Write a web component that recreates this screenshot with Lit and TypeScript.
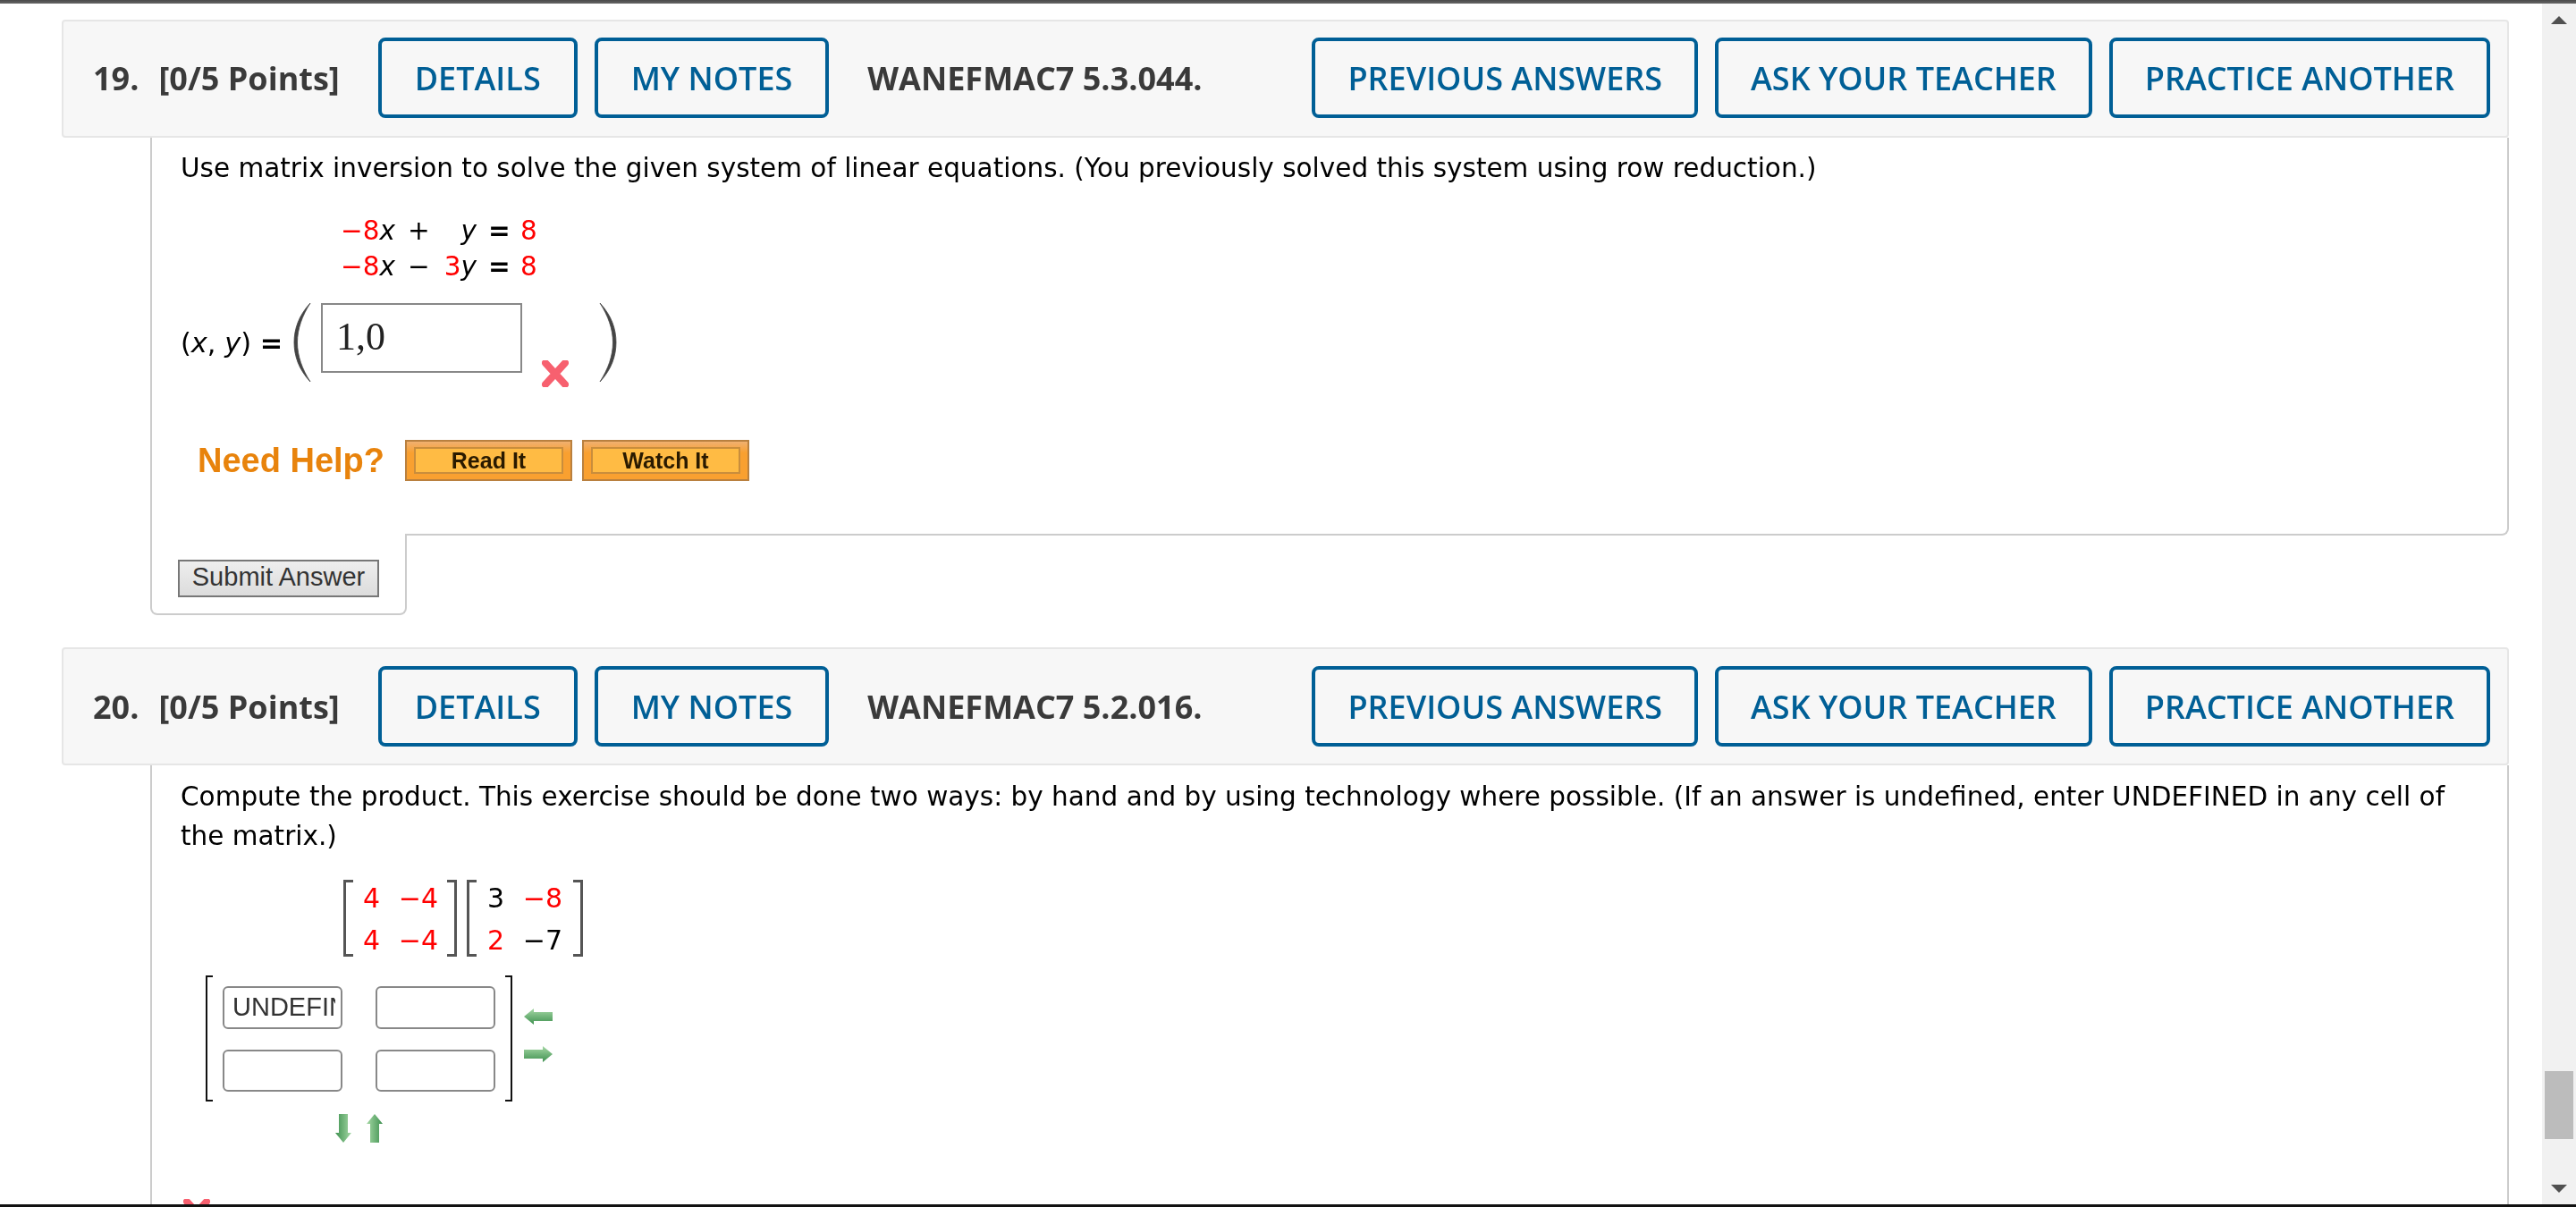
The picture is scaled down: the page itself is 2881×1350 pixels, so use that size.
import { LitElement, html, css, svg } from "lit";
import { customElement } from "lit/decorators.js";

const crossMark = html`<svg class="cross" viewBox="0 0 30 30" width="30" height="30"><path d="M4 3 L26 27 M26 3 L4 27" stroke="#f7606f" stroke-width="8" stroke-linecap="round" fill="none"/></svg>`;

const arrowDefs = svg`<defs><linearGradient id="ag" x1="0" y1="0" x2="0" y2="1"><stop offset="0" stop-color="#a5d8a5"/><stop offset="1" stop-color="#3f9150"/></linearGradient></defs>`;
const arrow = (cls: string) => html`<svg class="arrow ${cls}" viewBox="0 0 32 18" width="32" height="18">${arrowDefs}<path d="M0 4 H21 V0 L32 9 L21 18 V14 H0 Z" fill="url(#ag)"/></svg>`;

const paren = (flip: boolean) => html`<svg class="paren ${flip ? "flip" : ""}" viewBox="0 0 20 90" width="20" height="90"><path d="M19 1 C6 15 1 30 1 45 C1 60 6 75 19 89 C10 75 4.5 60 4.5 45 C4.5 30 10 15 19 1 Z" fill="#444" stroke="#444" stroke-width="0.8"/></svg>`;

const header = (num: string, code: string) => html`
  <div class="qhead">
    <span class="num">${num}</span>
    <span class="pts">[0/5 Points]</span>
    <a class="btn first">DETAILS</a>
    <a class="btn wide">MY NOTES</a>
    <span class="code">${code}</span>
    <a class="btn push">PREVIOUS ANSWERS</a>
    <a class="btn">ASK YOUR TEACHER</a>
    <a class="btn">PRACTICE ANOTHER</a>
  </div>`;

@customElement("app-root")
export class AppRoot extends LitElement {
  static styles = css`
    :host { display: block; width: 2881px; height: 1350px; overflow: hidden; background: #fff; font-family: "DejaVu Sans", sans-serif; color: #000; }
    .frame { width: 2881px; height: 1350px; display: flex; flex-direction: column; filter: blur(0.5px); }
    .topbar { height: 4px; flex: none; background: linear-gradient(#4a4a4a, #666); }
    .bottombar { height: 3px; flex: none; background: #111; }
    .main { flex: 1; min-height: 0; display: flex; }
    .content { flex: 1; min-width: 0; overflow: hidden; padding: 18px 37px 0 69px; }
    .scrollbar { width: 38px; flex: none; background: #f1f1f1; display: flex; flex-direction: column; align-items: center; padding: 14px 0 13px; box-sizing: border-box; }
    .up { width: 0; height: 0; border-left: 9px solid transparent; border-right: 9px solid transparent; border-bottom: 9px solid #505050; }
    .down { width: 0; height: 0; border-left: 9px solid transparent; border-right: 9px solid transparent; border-top: 9px solid #505050; }
    .thumb { width: 32px; height: 76px; background: #bcbcbc; margin-top: auto; margin-bottom: 51px; }

    .qhead { height: 132px; box-sizing: border-box; background: #f7f7f7; border: 2px solid #e6e6e6; border-radius: 4px; display: flex; align-items: center; padding: 0 19px 2px 33px; font-family: "Open Sans", sans-serif; white-space: nowrap; }
    .second .qhead { padding-bottom: 0; }
    .num, .pts, .code { font-weight: 700; font-size: 36px; color: #3a3a3a; }
    .pts { margin-left: 22px; }
    .btn { box-sizing: border-box; height: 90px; display: flex; align-items: center; padding: 0 36px; border: 4.5px solid #005f96; border-radius: 8px; color: #005f96; font-size: 36px; font-weight: 600; margin-left: 19px; }
    .btn.first { margin-left: 43px; padding: 0 37px; }
    .btn.wide { padding: 0 37px; }
    .code { margin-left: 43px; }
    .btn.push { margin-left: auto; }

    .qbody { margin-left: 99px; box-sizing: border-box; border: 2px solid #ccc; border-top: none; padding: 12px 0 0 32px; font-size: 29.5px; line-height: 44px; }
    .qbody.one { height: 445px; border-bottom-right-radius: 8px; }
    .qbody.two { border-bottom: none; height: 700px; padding-top: 13px; padding-right: 60px; }
    .tab { margin-left: 99px; margin-top: -2px; width: 287px; height: 91px; box-sizing: border-box; position: relative; background: #fff; border: 2px solid #ccc; border-top: none; border-radius: 0 0 8px 8px; padding: 29px 0 0 29px; }
    .submit { display: block; box-sizing: border-box; width: 225px; height: 42px; padding: 0 0 4px; border: 2px solid #777; background: linear-gradient(#eee, #dcdcdc); color: #333; font: 29px "Liberation Sans", sans-serif; line-height: 34px; text-align: center; }
    .second { margin-top: 36px; }

    .eq { margin: 28px 0 0 179px; display: grid; grid-template-columns: 75px 37px 53px 36px 30px; line-height: 40px; font-size: 29.5px; }
    .eq span { white-space: pre; }
    .r { color: #f00; }
    i { font-style: italic; }
    .cy { text-align: right; padding-right: 13px; }
    .eqop { font-weight: 700; }

    .answer { display: flex; align-items: flex-start; margin-top: 20px; height: 96px; }
    .lhs { font-size: 30.4px; line-height: 44px; margin-top: 24px; width: 126px; white-space: nowrap; }
    .paren { flex: none; display: block; }
    .paren.flip { transform: scaleX(-1); margin-left: 34px; }
    .bigin { width: 225px; height: 78px; margin: 1px 0 0 11px; box-sizing: border-box; border: 2px solid #888; background: #fff; font: 44px "Liberation Serif", serif; padding: 0 0 3px 15px; color: #222; outline: none; }
    .answer .cross { margin: 65px 0 0 22px; }

    .help { display: flex; align-items: center; margin: 58px 0 0 19px; height: 46px; }
    .needhelp { font: 700 38px "Liberation Sans", sans-serif; color: #e8830c; width: 232px; white-space: nowrap; }
    .orange { box-sizing: border-box; width: 187px; height: 46px; margin-right: 11px; border: 2px solid #b9803f; background: linear-gradient(#f0b070, #f9a030 30%, #f9a030); padding: 6px 8px; display: flex; }
    .orange span { flex: 1; border: 2px solid #c98d3c; background: #ffbb44; display: flex; align-items: center; justify-content: center; font: 700 25px "Liberation Sans", sans-serif; color: #2a1a00; }

    .mat { display: flex; margin: 27px 0 0 182px; height: 86px; align-items: stretch; }
    .br { width: 11px; border: 3px solid #555; box-sizing: border-box; flex: none; }
    .br.l { border-right: none; }
    .br.rr { border-left: none; }
    .cells { display: grid; grid-template-rows: 47px 47px; font-size: 30px; line-height: 47px; text-align: right; margin-top: -3px; }
    .m1 { grid-template-columns: 30px 65px; padding-right: 10px; }
    .m2 { grid-template-columns: 31px 65px; padding-right: 12px; }
    .gapb { margin-left: 11px; }

    .entry { display: flex; margin: 21px 0 0 28px; align-items: flex-start; }
    .bigbr { width: 8px; height: 141px; box-sizing: border-box; border: 2px solid #111; flex: none; }
    .bigbr.l { border-right: none; }
    .bigbr.rr { border-left: none; }
    .grid { display: grid; grid-template-columns: 134px 134px; column-gap: 37px; row-gap: 23px; padding: 12px 11px 0 11px; }
    .grid input { box-sizing: border-box; width: 134px; height: 47.5px; border: 2px solid #888; border-radius: 6px; background: #fff; font: 29px "Liberation Sans", sans-serif; color: #333; padding: 0 6px 0 9px; outline: none; }
    .rowarrows { display: flex; flex-direction: column; gap: 24px; margin: 37px 0 0 13px; }
    .arrow { display: block; flex: none; }
    .arrow.left { transform: scaleX(-1); }
    .colarrows { display: flex; gap: 17px; margin: 14px 0 0 173px; height: 32px; }
    .vert { width: 18px; height: 32px; display: flex; align-items: center; justify-content: center; }
    .arrow.dn { transform: rotate(90deg); }
    .arrow.upw { transform: rotate(-90deg); }
    .lastx { margin: 61px 0 0 3px; display: block; }
  `;

  render() {
    return html`
      <div class="frame">
        <div class="topbar"></div>
        <div class="main">
          <div class="content">
            ${header("19.", "WANEFMAC7 5.3.044.")}
            <div class="qbody one">
              <div>Use matrix inversion to solve the given system of linear equations. (You previously solved this system using row reduction.)</div>
              <div class="eq">
                <span><span class="r">−8</span><i>x</i></span><span>+</span><span class="cy"><i>y</i></span><span class="eqop">=</span><span class="r">8</span>
                <span><span class="r">−8</span><i>x</i></span><span>−</span><span class="cy"><span class="r">3</span><i>y</i></span><span class="eqop">=</span><span class="r">8</span>
              </div>
              <div class="answer">
                <span class="lhs">(<i>x</i>, <i>y</i>) <span class="eqop">=</span></span>
                ${paren(false)}
                <input class="bigin" .value=${"1,0"} readonly />
                ${crossMark}
                ${paren(true)}
              </div>
              <div class="help">
                <span class="needhelp">Need Help?</span>
                <a class="orange"><span>Read It</span></a>
                <a class="orange"><span>Watch It</span></a>
              </div>
            </div>
            <div class="tab"><button class="submit">Submit Answer</button></div>
            <div class="second">
              ${header("20.", "WANEFMAC7 5.2.016.")}
              <div class="qbody two">
                <div>Compute the product. This exercise should be done two ways: by hand and by using technology where possible. (If an answer is undefined, enter UNDEFINED in any cell of the matrix.)</div>
                <div class="mat">
                  <div class="br l"></div>
                  <div class="cells m1"><span class="r">4</span><span class="r">−4</span><span class="r">4</span><span class="r">−4</span></div>
                  <div class="br rr"></div>
                  <div class="br l gapb"></div>
                  <div class="cells m2"><span>3</span><span class="r">−8</span><span class="r">2</span><span>−7</span></div>
                  <div class="br rr"></div>
                </div>
                <div class="entry">
                  <div class="bigbr l"></div>
                  <div class="grid">
                    <input .value=${"UNDEFINED"} readonly />
                    <input readonly />
                    <input readonly />
                    <input readonly />
                  </div>
                  <div class="bigbr rr"></div>
                  <div class="rowarrows">${arrow("left")}${arrow("")}</div>
                </div>
                <div class="colarrows">
                  <div class="vert">${arrow("dn")}</div>
                  <div class="vert">${arrow("upw")}</div>
                </div>
                <div class="lastx">${crossMark}</div>
              </div>
            </div>
          </div>
          <div class="scrollbar">
            <div class="up"></div>
            <div class="thumb"></div>
            <div class="down"></div>
          </div>
        </div>
        <div class="bottombar"></div>
      </div>
    `;
  }
}
